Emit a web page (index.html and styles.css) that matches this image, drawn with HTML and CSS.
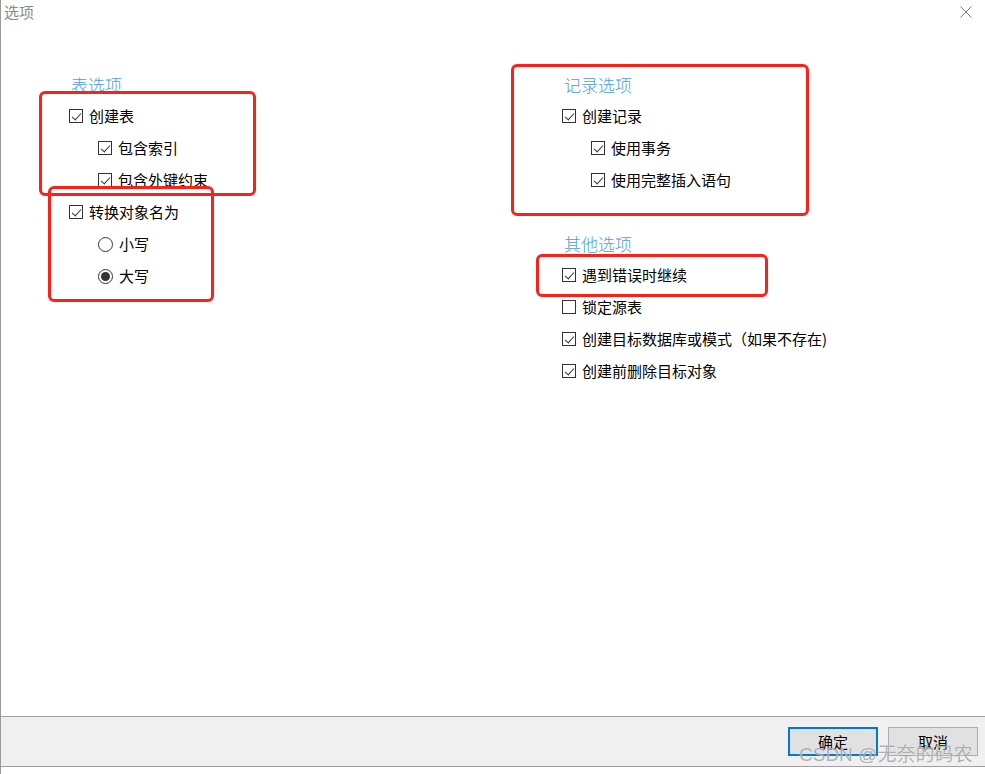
FILE: index.html
```html
<!DOCTYPE html>
<html lang="zh">
<head>
<meta charset="utf-8">
<title>选项</title>
<link rel="stylesheet" href="styles.css">
</head>
<body>
<div class="window">
  <div class="titlebar">
    <span class="title">选项</span>
    <svg class="close" width="12" height="12" viewBox="0 0 12 12"><path d="M0.5 0.5 L11.5 11.5 M11.5 0.5 L0.5 11.5" stroke="#777" stroke-width="1" fill="none"/></svg>
  </div>
  <div class="content">
    <div class="col col-left">
      <div class="sec-title">表选项</div>
      <div class="row"><span class="cb on"></span><span>创建表</span></div>
      <div class="row sub"><span class="cb on"></span><span>包含索引</span></div>
      <div class="row sub"><span class="cb on"></span><span>包含外键约束</span></div>
      <div class="row"><span class="cb on"></span><span>转换对象名为</span></div>
      <div class="row sub"><span class="rb"></span><span>小写</span></div>
      <div class="row sub"><span class="rb on"></span><span>大写</span></div>
    </div>
    <div class="col col-right">
      <div class="sec-title">记录选项</div>
      <div class="row"><span class="cb on"></span><span>创建记录</span></div>
      <div class="row sub"><span class="cb on"></span><span>使用事务</span></div>
      <div class="row sub"><span class="cb on"></span><span>使用完整插入语句</span></div>
      <div class="sec-title sec-gap">其他选项</div>
      <div class="row"><span class="cb on"></span><span>遇到错误时继续</span></div>
      <div class="row"><span class="cb"></span><span>锁定源表</span></div>
      <div class="row"><span class="cb on"></span><span>创建目标数据库或模式（如果不存在)</span></div>
      <div class="row"><span class="cb on"></span><span>创建前删除目标对象</span></div>
    </div>
  </div>
  <div class="footer">
    <button class="btn btn-default">确定</button>
    <button class="btn">取消</button>
  </div>
  <div class="mark mark-1"></div>
  <div class="mark mark-2"></div>
  <div class="mark mark-3"></div>
  <div class="mark mark-4"></div>
  <div class="watermark">CSDN @无奈的码农</div>
</div>
</body>
</html>
```
FILE: styles.css
```css
* { box-sizing: border-box; }
html, body { margin: 0; padding: 0; background: #fff; }
body {
  font-family: "Noto Sans CJK SC", "Noto Sans", sans-serif;
  font-size: 15px;
  color: #000;
}
.window {
  position: relative;
  width: 985px;
  height: 774px;
  display: flex;
  flex-direction: column;
  border-left: 1px solid #9a9a9a;
  overflow: hidden;
}
.titlebar {
  height: 26px;
  display: flex;
  align-items: center;
  justify-content: space-between;
  padding: 0 13px 0 3px;
}
.title {
  font-size: 15px;
  color: #8a8a8a;
  line-height: 20px;
  margin-top: -2px;
}
.close { margin-top: -2px; }
.content {
  flex: 1;
  display: flex;
  padding-top: 45px;
}
.col { display: flex; flex-direction: column; }
.col-left { width: 561px; padding-left: 68px; }
.col-right { flex: 1; }
.sec-title {
  height: 30px;
  line-height: 30px;
  font-size: 17px;
  font-weight: 300;
  color: #4b9be8;
  padding-left: 2px;
  margin-top: -1px;
}
.sec-gap { margin-top: 33px; }
.row {
  height: 32px;
  display: flex;
  align-items: center;
  gap: 6px;
  line-height: 20px;
}
.row.sub { padding-left: 29px; }
.cb {
  width: 14px;
  height: 14px;
  border: 1px solid #333;
  background: #fff;
  flex: none;
  position: relative;
}
.cb.on::after {
  content: "";
  position: absolute;
  left: 3.5px;
  top: 0.5px;
  width: 4px;
  height: 8px;
  border-right: 1.5px solid #333;
  border-bottom: 1.5px solid #333;
  transform: rotate(42deg);
}
.rb {
  width: 15px;
  height: 15px;
  border: 1px solid #333;
  border-radius: 50%;
  background: #fff;
  flex: none;
  display: flex;
  align-items: center;
  justify-content: center;
}
.rb.on::after {
  content: "";
  width: 9px;
  height: 9px;
  border-radius: 50%;
  background: #333;
}
.footer {
  height: 51px;
  margin-bottom: 7px;
  border-top: 1px solid #a0a0a0;
  border-bottom: 1px solid #a0a0a0;
  background: #f0f0f0;
  display: flex;
  justify-content: flex-end;
  align-items: flex-start;
  gap: 10px;
  padding: 10px 7px 0 0;
}
.btn {
  width: 90px;
  height: 29px;
  font-family: "Noto Sans CJK SC", sans-serif;
  font-size: 15px;
  color: #000;
  background: #e1e1e1;
  border: 1px solid #adadad;
  padding: 0;
  line-height: 20px;
}
.btn-default { border: 2px solid #0078d7; }
.mark {
  position: absolute;
  border: 3px solid #fc2118;
  border-radius: 6px;
}
.mark-1 { left: 38px; top: 91px; width: 217px; height: 105px; }
.mark-2 { left: 47px; top: 186px; width: 166px; height: 116px; }
.mark-3 { left: 510px; top: 64px; width: 298px; height: 152px; }
.mark-4 { left: 535px; top: 254px; width: 232px; height: 43px; }
.watermark {
  position: absolute;
  left: 798px;
  top: 742px;
  font-family: "Liberation Sans", "Noto Sans CJK SC", sans-serif;
  font-size: 19px;
  line-height: 26px;
  color: rgba(110, 110, 110, 0.55);
  text-shadow: 0 0 1px rgba(255,255,255,0.9);
  white-space: nowrap;
}
```
